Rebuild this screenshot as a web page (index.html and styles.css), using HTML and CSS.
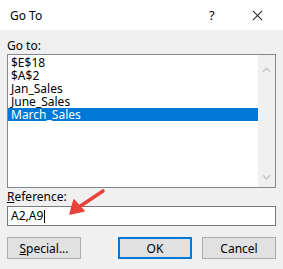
FILE: index.html
```html
<!DOCTYPE html>
<html>
<head>
  <title>Go To</title>
  <link rel="stylesheet" href="styles.css">
</head>
<body>
  <div class="dialog">
    <div class="titlebar">
      <span class="title">Go To</span>
      <span class="help">?</span>
      <svg class="close" viewBox="0 0 12 12" xmlns="http://www.w3.org/2000/svg">
        <path d="M1 1 L11 11 M11 1 L1 11" stroke="#222" stroke-width="1.1" fill="none"/>
      </svg>
    </div>

    <div class="content">
      <div class="label">Go to:</div>
      <div class="listbox">
        <div class="items">
          <div class="item">$E$18</div>
          <div class="item">$A$2</div>
          <div class="item">Jan_Sales</div>
          <div class="item">June_Sales</div>
          <div class="item selected">March_Sales</div>
        </div>
        <div class="scrollbar">
          <svg class="chevron" viewBox="0 0 10 6" xmlns="http://www.w3.org/2000/svg">
            <path d="M1 5 L5 1 L9 5" stroke="#c2c2c2" stroke-width="1.4" fill="none"/>
          </svg>
          <svg class="chevron" viewBox="0 0 10 6" xmlns="http://www.w3.org/2000/svg">
            <path d="M1 1 L5 5 L9 1" stroke="#c2c2c2" stroke-width="1.4" fill="none"/>
          </svg>
        </div>
      </div>

      <div class="label ref-label"><u>R</u>eference:</div>
      <div class="ref-wrap">
        <div class="input">A2,A9<span class="caret"></span></div>
        <!-- callout arrow pointing at the reference box -->
        <svg class="arrow" viewBox="0 0 40 32" xmlns="http://www.w3.org/2000/svg">
          <path d="M36 4 L12 20" stroke="#e8433b" stroke-width="3.6" stroke-linecap="round" fill="none"/>
          <path d="M3 27 L7 13 L17 24 Z" fill="#e8433b" stroke="#e8433b" stroke-width="1.5" stroke-linejoin="round"/>
        </svg>
      </div>

      <div class="button-row">
        <button class="btn"><u>S</u>pecial...</button>
        <div class="spacer"></div>
        <button class="btn default">OK</button>
        <button class="btn">Cancel</button>
      </div>
    </div>
  </div>
</body>
</html>
```

FILE: styles.css
```css
body {
  margin: 0;
  font-family: "Noto Sans", sans-serif;
  font-size: 12px;
  color: #000;
}
.dialog {
  width: 283px;
  height: 269px;
  background-color: #f0f0f0;
  overflow: hidden;
}
.titlebar {
  height: 30px;
  background-color: #fff;
  display: flex;
  align-items: center;
  padding-left: 10px;
}
.title {
  flex: 1;
  font-size: 12px;
}
.help {
  width: 12px;
  margin-right: 31px;
  font-size: 13px;
}
.close {
  width: 11px;
  height: 11px;
  margin-right: 20px;
}
.content {
  padding: 8px 7px 0 7px;
}
.label {
  height: 15px;
  line-height: 15px;
  margin-bottom: 1px;
}
.listbox {
  height: 132px;
  border: 1px solid #828790;
  background-color: #fff;
  display: flex;
}
.items {
  flex: 1;
  padding-top: 1px;
}
.item {
  height: 13px;
  line-height: 13px;
  padding-left: 3px;
}
.item.selected {
  background-color: #0078d7;
  color: #fff;
}
.scrollbar {
  width: 17px;
  background-color: #f0f0f0;
  display: flex;
  flex-direction: column;
  justify-content: space-between;
  align-items: center;
  padding: 12px 0 7px 0;
  box-sizing: border-box;
}
.chevron {
  width: 9px;
  height: 6px;
}
.ref-label {
  margin-top: 1px;
  margin-bottom: 2px;
}
.ref-wrap {
  position: relative;
}
.input {
  height: 18px;
  line-height: 18px;
  border: 1px solid #7a7a7a;
  background-color: #fff;
  padding-left: 3px;
  display: flex;
  align-items: center;
}
.caret {
  display: inline-block;
  width: 1px;
  height: 13px;
  background-color: #000;
  margin-left: 1px;
}
.arrow {
  position: absolute;
  left: 60px;
  top: -19px;
  width: 40px;
  height: 32px;
}
.button-row {
  display: flex;
  margin-top: 11px;
  gap: 10px;
}
.spacer {
  flex: 1;
}
.btn {
  width: 74px;
  height: 22px;
  padding: 0;
  background-color: #e1e1e1;
  border: 1px solid #adadad;
  border-radius: 0;
  font-family: "Noto Sans", sans-serif;
  font-size: 12px;
  color: #000;
}
.btn.default {
  border: 2px solid #0078d7;
}
```
